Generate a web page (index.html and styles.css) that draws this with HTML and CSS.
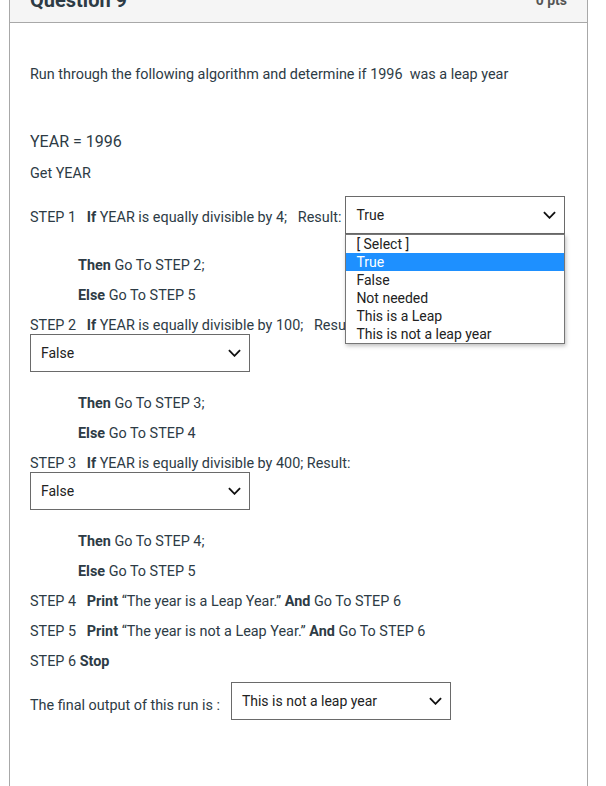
FILE: index.html
```html
<!DOCTYPE html>
<html>
<head>
<meta charset="utf-8">
<link rel="stylesheet" href="styles.css">
</head>
<body>
<div class="card">
  <div class="card-header">
    <span class="title">Question 9</span>
    <span class="pts">0 pts</span>
  </div>
  <div class="card-body">
    <p class="line intro">Run through the following algorithm and determine if 1996&nbsp; was a leap year</p>
    <p class="line year">YEAR = 1996</p>
    <p class="line get">Get YEAR</p>

    <div class="row step1">
      <span class="row-text">STEP 1&nbsp;&nbsp; <b>If</b> YEAR is equally divisible by 4;&nbsp;&nbsp; Result:</span>
      <div class="select-wrap">
        <div class="select"><span>True</span><svg class="chev" viewBox="0 0 14 8" width="13" height="8"><path d="M1 1 L7 7 L13 1" fill="none" stroke="#111" stroke-width="2"/></svg></div>
        <ul class="listbox">
          <li>[ Select ]</li>
          <li class="active">True</li>
          <li>False</li>
          <li>Not needed</li>
          <li>This is a Leap</li>
          <li>This is not a leap year</li>
        </ul>
      </div>
    </div>

    <p class="line indent first"><b>Then</b> Go To STEP 2;</p>
    <p class="line indent"><b>Else</b> Go To STEP 5</p>
    <p class="line step-text">STEP 2&nbsp;&nbsp; <b>If</b> YEAR is equally divisible by 100;&nbsp;&nbsp; Result:</p>
    <div class="select block"><span>False</span><svg class="chev" viewBox="0 0 14 8" width="13" height="8"><path d="M1 1 L7 7 L13 1" fill="none" stroke="#111" stroke-width="2"/></svg></div>

    <p class="line indent first"><b>Then</b> Go To STEP 3;</p>
    <p class="line indent"><b>Else</b> Go To STEP 4</p>
    <p class="line step-text">STEP 3&nbsp;&nbsp; <b>If</b> YEAR is equally divisible by 400; Result:</p>
    <div class="select block"><span>False</span><svg class="chev" viewBox="0 0 14 8" width="13" height="8"><path d="M1 1 L7 7 L13 1" fill="none" stroke="#111" stroke-width="2"/></svg></div>

    <p class="line indent first"><b>Then</b> Go To STEP 4;</p>
    <p class="line indent"><b>Else</b> Go To STEP 5</p>
    <p class="line">STEP 4&nbsp;&nbsp; <b>Print</b> “The year is a Leap Year.” <b>And</b> Go To STEP 6</p>
    <p class="line">STEP 5&nbsp;&nbsp; <b>Print</b> “The year is not a Leap Year.” <b>And</b> Go To STEP 6</p>
    <p class="line">STEP 6 <b>Stop</b></p>

    <div class="row final">
      <span class="row-text">The final output of this run is :</span>
      <div class="select"><span>This is not a leap year</span><svg class="chev" viewBox="0 0 14 8" width="13" height="8"><path d="M1 1 L7 7 L13 1" fill="none" stroke="#111" stroke-width="2"/></svg></div>
    </div>
  </div>
</div>
</body>
</html>
```
FILE: styles.css
```css
html, body {
  margin: 0;
  padding: 0;
  background: #fff;
}
body {
  font-family: Roboto, "Liberation Sans", Arial, sans-serif;
  color: #2d3b45;
  font-size: 14px;
}
.card {
  margin: -20px 0 0 9px;
  width: 579px;
  box-sizing: border-box;
  border: 1px solid #a8a8a8;
  border-top: none;
  min-height: 830px;
}
.card-header {
  height: 42px;
  background: #f5f5f5;
  border-bottom: 1px solid #a8a8a8;
  display: flex;
  align-items: center;
  justify-content: space-between;
  padding: 0 20px;
}
.card-header .title {
  font-weight: 700;
  font-size: 20px;
  position: relative;
  top: -1px;
}
.card-header .pts {
  font-weight: 700;
  font-size: 14px;
  color: #555;
  top: -1px;
  position: relative;
}
.card-body {
  padding: 41px 20px 40px 20px;
}
.line {
  margin: 10px 0 0 0;
  line-height: 22px;
  height: 20px;
  white-space: nowrap;
  font-size: 14.4px;
}
.line.intro { margin-top: 0; }
.line.year { margin-top: 47px; font-size: 16px; }
.line.get { margin-top: 12px; }
.line.first { margin-top: 21px; }
.indent { padding-left: 48px; }
.line.step-text { margin-top: 9px; line-height: 24px; }

.row {
  display: flex;
  align-items: center;
  white-space: nowrap;
}
.row-text {
  line-height: 22px;
  padding-top: 6px;
  font-size: 14.4px;
}
.step1 { margin-top: 13px; }
.step1 .row-text { margin-right: 4px; }
.final { margin-top: 11px; }
.final .row-text { margin-right: 11px; padding-top: 9px; }

.select-wrap {
  position: relative;
}
.select {
  width: 220px;
  height: 38px;
  box-sizing: border-box;
  border: 1px solid #6a6a6a;
  display: flex;
  align-items: center;
  justify-content: space-between;
  padding: 0 8px 1px 10px;
  color: #222;
  font-size: 14px;
  background: #fff;
}
.chev { margin-top: 1px; }
.listbox {
  position: absolute;
  left: 0;
  top: 38px;
  width: 220px;
  box-sizing: border-box;
  margin: 0;
  padding: 0;
  list-style: none;
  background: #fff;
  border: 1px solid #767676;
  box-shadow: 1px 2px 4px rgba(0,0,0,0.25);
  z-index: 5;
}
.listbox li {
  height: 18px;
  line-height: 18px;
  padding-left: 10px;
  color: #222;
  font-size: 14px;
}
.listbox li.active {
  background: #1e90ff;
  color: #fff;
}
```
